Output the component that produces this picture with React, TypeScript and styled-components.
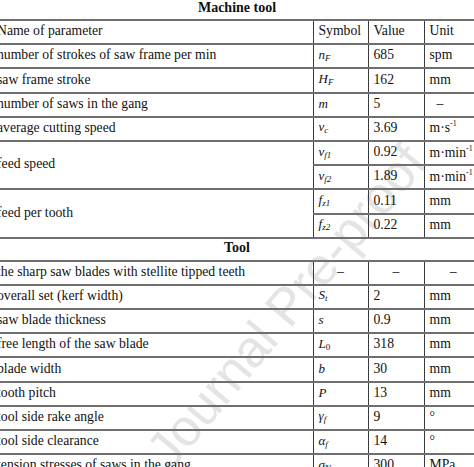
import React from "react";
import styled, { createGlobalStyle } from "styled-components";

const GlobalStyle = createGlobalStyle`
  html, body {
    margin: 0;
    padding: 0;
    background: #fff;
  }
`;

const Page = styled.div`
  position: relative;
  width: 474px;
  height: 467px;
  overflow: hidden;
  background: #fff;
  font-family: "Liberation Serif", "Times New Roman", serif;
  color: #111;
`;

const Watermark = styled.span`
  position: absolute;
  left: 286px;
  top: 306px;
  transform: translate(-50%, -50%) rotate(-50deg);
  white-space: nowrap;
  font-family: "Liberation Sans", Arial, sans-serif;
  font-size: 52px;
  color: #e4e4e4;
  pointer-events: none;
`;

const Table = styled.table`
  position: relative;
  margin-left: -8px;
  width: 490px;
  border-collapse: collapse;
  table-layout: fixed;
  font-size: 13.7px;
  line-height: 1;
`;

const Row = styled.tr<{ $h?: number }>`
  height: ${(p) => p.$h ?? 24.2}px;
`;

const Cell = styled.td<{ $center?: boolean; $noBottom?: boolean; $indent?: number }>`
  padding: 0 5px 2px ${(p) => p.$indent ?? 5}px;
  vertical-align: middle;
  white-space: nowrap;
  overflow: visible;
  text-align: ${(p) => (p.$center ? "center" : "left")};
  border-bottom: ${(p) => (p.$noBottom ? "none" : "2px solid #6f6f6f")};
  & + & {
    border-left: 1px solid #3a3a3a;
  }
`;

const SectionCell = styled.td<{ $top?: boolean }>`
  padding: 0 0 3px;
  text-align: center;
  font-weight: bold;
  font-size: 14px;
  vertical-align: middle;
  border-bottom: 2px solid #6f6f6f;
  border-top: ${(p) => (p.$top ? "2px solid #6f6f6f" : "none")};
`;

const Sym = styled.i`
  font-style: italic;
  font-size: 13px;
`;

const Sub = styled.sub<{ $upright?: boolean }>`
  font-size: 9px;
  font-style: ${(p) => (p.$upright ? "normal" : "italic")};
  vertical-align: -2px;
`;

const Sup = styled.sup`
  font-size: 8px;
  vertical-align: 6px;
`;

type R = {
  name: string;
  sym: React.ReactNode;
  value: string;
  unit: React.ReactNode;
  dash?: boolean;
};

const machine: R[] = [
  { name: "number of strokes of saw frame per min", sym: <Sym>n<Sub>F</Sub></Sym>, value: "685", unit: "spm" },
  { name: "saw frame stroke", sym: <Sym>H<Sub>F</Sub></Sym>, value: "162", unit: "mm" },
  { name: "number of saws in the gang", sym: <Sym>m</Sym>, value: "5", unit: "–", dash: true },
  { name: "average cutting speed", sym: <Sym>v<Sub>c</Sub></Sym>, value: "3.69", unit: <>m·s<Sup>-1</Sup></> },
];

const tool: R[] = [
  { name: "overall set (kerf width)", sym: <Sym>S<Sub>t</Sub></Sym>, value: "2", unit: "mm" },
  { name: "saw blade thickness", sym: <Sym>s</Sym>, value: "0.9", unit: "mm" },
  { name: "free length of the saw blade", sym: <Sym>L<Sub $upright>0</Sub></Sym>, value: "318", unit: "mm" },
  { name: "blade width", sym: <Sym>b</Sym>, value: "30", unit: "mm" },
  { name: "tooth pitch", sym: <Sym>P</Sym>, value: "13", unit: "mm" },
  { name: "tool side rake angle", sym: <Sym>γ<Sub>f</Sub></Sym>, value: "9", unit: "°" },
  { name: "tool side clearance", sym: <Sym>α<Sub>f</Sub></Sym>, value: "14", unit: "°" },
  { name: "tension stresses of saws in the gang", sym: <Sym>σ<Sub $upright>N</Sub></Sym>, value: "300", unit: "MPa" },
];

const ParamRow = ({ r }: { r: R }) => (
  <Row>
    <Cell>{r.name}</Cell>
    <Cell>{r.sym}</Cell>
    <Cell>{r.value}</Cell>
    <Cell $indent={r.dash ? 12 : 5}>{r.unit}</Cell>
  </Row>
);

const PairRow = ({
  name,
  a,
  b,
}: {
  name: string;
  a: Omit<R, "name">;
  b: Omit<R, "name">;
}) => (
  <>
    <Row>
      <Cell rowSpan={2}>{name}</Cell>
      <Cell>{a.sym}</Cell>
      <Cell>{a.value}</Cell>
      <Cell>{a.unit}</Cell>
    </Row>
    <Row>
      <Cell style={{ borderLeft: "1px solid #3a3a3a" }}>{b.sym}</Cell>
      <Cell>{b.value}</Cell>
      <Cell>{b.unit}</Cell>
    </Row>
  </>
);

export default function App() {
  return (
    <>
      <GlobalStyle />
      <Page>
        <Watermark>Journal Pre-proof</Watermark>
        <Table>
          <colgroup>
            <col style={{ width: 321 }} />
            <col style={{ width: 55 }} />
            <col style={{ width: 56 }} />
            <col style={{ width: 58 }} />
          </colgroup>
          <tbody>
            <Row $h={20}>
              <SectionCell colSpan={4}>Machine tool</SectionCell>
            </Row>
            <Row>
              <Cell>Name of parameter</Cell>
              <Cell>Symbol</Cell>
              <Cell>Value</Cell>
              <Cell>Unit</Cell>
            </Row>
            {machine.map((r) => (
              <ParamRow key={r.name} r={r} />
            ))}
            <PairRow
              name="feed speed"
              a={{ sym: <Sym>v<Sub>f1</Sub></Sym>, value: "0.92", unit: <>m·min<Sup>-1</Sup></> }}
              b={{ sym: <Sym>v<Sub>f2</Sub></Sym>, value: "1.89", unit: <>m·min<Sup>-1</Sup></> }}
            />
            <PairRow
              name="feed per tooth"
              a={{ sym: <Sym>f<Sub>z1</Sub></Sym>, value: "0.11", unit: "mm" }}
              b={{ sym: <Sym>f<Sub>z2</Sub></Sym>, value: "0.22", unit: "mm" }}
            />
            <Row $h={23}>
              <SectionCell colSpan={4}>Tool</SectionCell>
            </Row>
            <Row>
              <Cell>the sharp saw blades with stellite tipped teeth</Cell>
              <Cell $center>–</Cell>
              <Cell $center>–</Cell>
              <Cell $center>–</Cell>
            </Row>
            {tool.map((r) => (
              <ParamRow key={r.name} r={r} />
            ))}
          </tbody>
        </Table>
      </Page>
    </>
  );
}
